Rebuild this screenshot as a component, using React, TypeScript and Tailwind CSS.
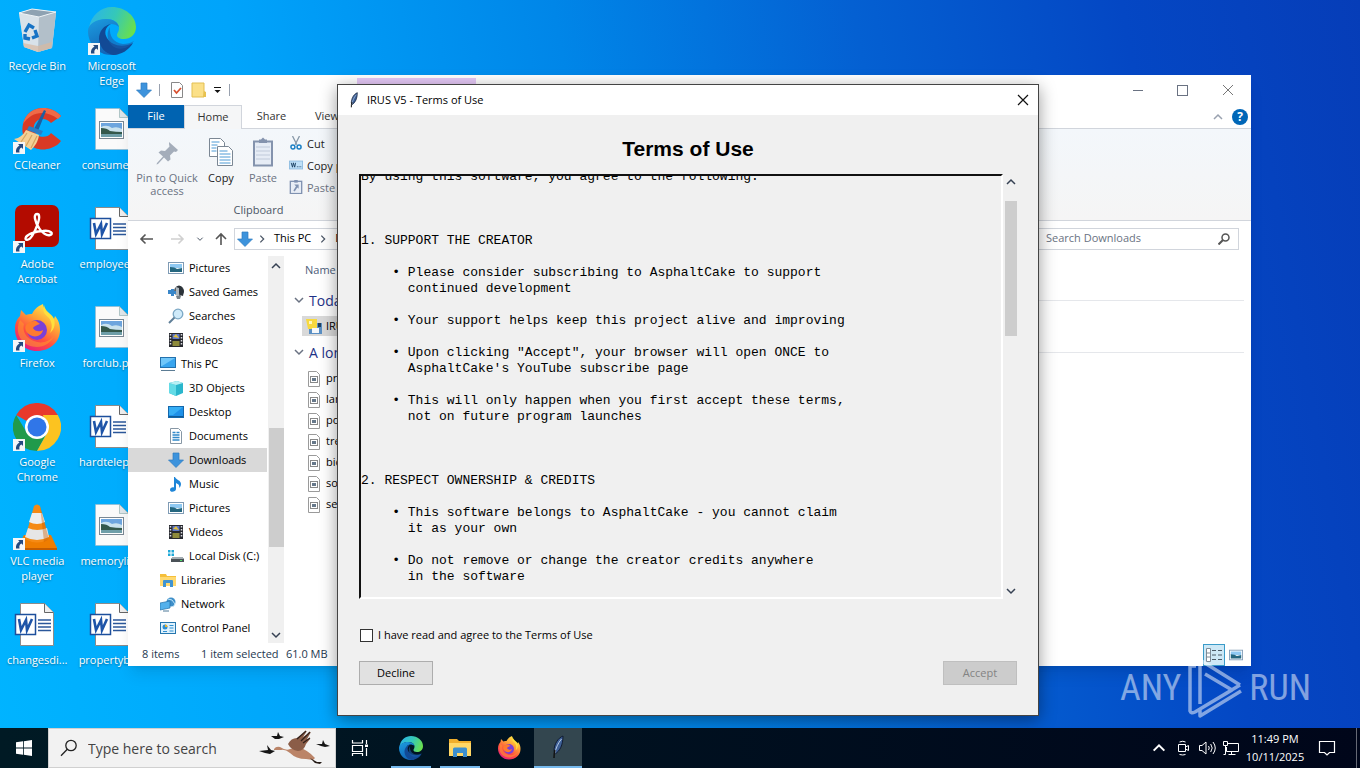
import { useState } from "react";
import type { ReactNode } from "react";

/* ---------- app logos ---------- */

function EdgeLogo({ className }: { className: string }) {
  return (
    <svg viewBox="0 0 48 48" className={className}>
      <defs>
        <linearGradient id="edgeGreen" x1="0" y1="0.3" x2="1" y2="0.6">
          <stop offset="0" stopColor="#2bb5e8" />
          <stop offset="0.5" stopColor="#35c8b8" />
          <stop offset="1" stopColor="#6be04a" />
        </linearGradient>
        <linearGradient id="edgeBlue" x1="0" y1="0" x2="0.4" y2="1">
          <stop offset="0" stopColor="#1c9de0" />
          <stop offset="1" stopColor="#1266b8" />
        </linearGradient>
      </defs>
      <path d="M1 21C3 8 13 0 24 0c13 0 24 9 24 20 0 8-6 12-12 12-5 0-7-2-7-4s2-3 2-7c0-5-5-9-12-9-8 0-16 4-18 9z" fill="url(#edgeGreen)" />
      <path d="M0 24c0-7 8-12 18-12 7 0 12 3 13 8-2-2-5-3-8-3-7 0-10 7-8 14 2 8 8 14 16 16-3 1-5 1-8 1C10 48 0 37 0 24z" fill="url(#edgeBlue)" />
      <path d="M23 17c-6 3-7 9-4 14 5 8 16 10 26 5-4 7-12 12-20 12-8-2-13-7-14-16 0-8 5-14 12-15z" fill="#124a96" />
      <path d="M22 20c-1 8 3 16 13 17 4 0 8-1 11-3-5 7-12 9-18 7-8-3-11-14-6-21z" fill="#1b5fae" opacity=".6" />
    </svg>
  );
}

function FirefoxLogo({ className }: { className: string }) {
  return (
    <svg viewBox="0 0 48 48" className={className}>
      <defs>
        <linearGradient id="foxBody" x1="0.8" y1="0" x2="0.2" y2="1">
          <stop offset="0" stopColor="#fff44f" />
          <stop offset="0.35" stopColor="#ffa436" />
          <stop offset="0.65" stopColor="#ff4f3f" />
          <stop offset="1" stopColor="#e31587" />
        </linearGradient>
      </defs>
      <path d="M24 47C11 47 2 37 2 25c0-6 2-10 5-13l1-6 5 5c2-1 4-1 6-1 2-4 4-6 7-8l4-2c0 4 2 7 6 11l5 4 1-3c4 5 5 9 5 14 0 12-10 21-23 21z" fill="url(#foxBody)" />
      <circle cx="24" cy="26" r="10" fill="#7a3fd8" />
      <path d="M14 20c3-3 6-3 9-3l4 3c-3 1-6 2-7 4 2 4 7 4 10 2-1 6-8 8-13 5-5-3-6-8-3-11z" fill="#ff7a2e" />
      <path d="M31 1c-2 5 0 9 4 12 4 4 5 10 2 16 5-4 6-11 3-16-3-4-8-6-9-12z" fill="#ffdf3c" />
      <path d="M7 16c-5 10-1 21 8 25 11 5 22 0 26-9-5 6-13 8-20 5-8-3-12-10-10-17z" fill="#ff9a2c" opacity=".55" />
    </svg>
  );
}

function ChromeLogo() {
  return (
    <svg viewBox="0 0 48 48" className="size-12">
      <path d="M24 24 3.2 12A24 24 0 0 1 44.8 12z" fill="#e8392c" />
      <path d="M3.2 12A24 24 0 0 0 24 48L34 30 24 24 14 30z" fill="#219a4b" />
      <path d="M44.8 12A24 24 0 0 1 24 48L34 30 30 12z" fill="#fcc320" />
      <circle cx="24" cy="24" r="12" fill="#fff" />
      <circle cx="24" cy="24" r="9.5" fill="#3076e8" />
    </svg>
  );
}

function VlcLogo() {
  return (
    <svg viewBox="0 0 48 48" className="size-12">
      <path d="M11 33h27l6 13H4z" fill="#ef7d00" />
      <path d="M4 46h40v2H4z" fill="#c45c00" />
      <path d="M21 4q3-3 6 0l9 33q-12 7-24 0z" fill="#f58a14" />
      <path d="M19 11h10l3 9q-8 4-16 0z" fill="#eee" />
      <path d="M15 26q9 4 19 0l2 9q-12 6-24 0z" fill="#e6e6e6" />
      <path d="M27 4l9 33-5 3z" fill="#c75d00" opacity=".4" />
    </svg>
  );
}

function AcrobatLogo() {
  return (
    <svg viewBox="0 0 48 48" className="size-12">
      <rect x="2" y="0" width="44" height="42" rx="7" fill="#b30b00" />
      <path d="M24 9c-4 0-2 8 2 14 3 5 8 8 11 7 4-1 1-5-7-4-7 0-15 3-17 6-2 4 3 4 6-1 4-6 8-17 7-20 0-1-1-2-2-2z" fill="none" stroke="#fff" strokeWidth="2.4" />
    </svg>
  );
}

function CCleanerLogo() {
  return (
    <svg viewBox="0 0 48 48" className="size-12">
      <path d="M48 10C36-3 14 0 10 18c-4 17 12 30 28 24 5-2 8-4 10-7l-10-8c-4 6-15 5-17-3-2-10 10-15 17-7z" fill="#d93a25" />
      <path d="M48 10C36-3 14 0 10 18c8-12 22-15 35-5z" fill="#ef6a48" />
      <path d="M31 4l2 1-8 20-4-2z" fill="#1c5fa0" />
      <path d="M16 20l14 5-2 4-14-5z" fill="#2b7ec6" />
      <path d="M13 24l13 5c-1 7-4 11-8 15L1 33c6-1 9-4 12-9z" fill="#f3cf95" />
      <path d="M14 27l-6 9M19 29l-6 11M24 30l-6 12" stroke="#d5a561" strokeWidth="1.2" />
    </svg>
  );
}

function RecycleBin() {
  return (
    <svg viewBox="0 0 48 48" className="size-12">
      <path d="M6 6l13-4 24 3-4 36-14 4-14-5z" fill="#c9d2da" opacity=".9" />
      <path d="M6 6l20 4 17-5-4 36-14 4-14-5z" fill="#e4e8ec" opacity=".75" />
      <path d="M26 10l17-5-4 36-14 4z" fill="#a9b6c1" opacity=".8" />
      <path d="M6 6l13-4 24 3-17 5z" fill="#8ea2b2" stroke="#eef3f6" strokeWidth="1" />
      <path d="M10 36l15 3 14-4-1 6-13 4-14-5z" fill="#d9b9a0" opacity=".7" />
      <g fill="none" stroke="#1673c5" strokeWidth="3.4">
        <path d="M12 25l4-7 5 3" />
        <path d="M22 23l2 6-5 2" />
        <path d="M17 32l-5-1 0-4" />
      </g>
    </svg>
  );
}

function WordFile() {
  return (
    <svg viewBox="2 0 48 48" className="size-12">
      <path d="M9.500 2.500h24l9 9v33h-33z" fill="#fff" stroke="#8b8b8b" />
      <path d="M33.500 2.500v9h9" fill="#eee" stroke="#666" />
      <path d="M27 19h13M27 22.500h13M27 26h13M27 29.500h13" stroke="#2b579a" strokeWidth="1.300" />
      <rect x="4.500" y="13.500" width="20" height="20" fill="#fff" stroke="#1d4f9c" strokeWidth="1.500" />
      <path d="M8 18l2 11 5-10 1 10 5-11" fill="none" stroke="#1e54a8" strokeWidth="2.600" />
    </svg>
  );
}

function PictureFile() {
  return (
    <svg viewBox="2 0 48 48" className="size-12">
      <path d="M9.500 2.500h24l9 9v32h-33z" fill="#fafafa" stroke="#9fb6c4" strokeWidth=".6" />
      <path d="M33.500 2.500v9h9z" fill="#dfe6ea" stroke="#8aa" strokeWidth=".6" />
      <rect x="13.500" y="15.500" width="24" height="17" fill="#fff" stroke="#7a8894" />
      <path d="M15 17h21v7H15z" fill="#6da5de" />
      <path d="M15 21q6-3 11 1 5-2 10 1v4H15z" fill="#c9e2ee" />
      <path d="M15 22q6 0 9 3 6 1 12 1v3H15z" fill="#35594c" />
      <path d="M15 28h21v3H15z" fill="#6f9fa9" />
    </svg>
  );
}

function ShortcutArrow() {
  return (
    <svg viewBox="0 0 12 12" className="absolute bottom-0 left-0 size-3">
      <rect width="12" height="12" fill="#f4f6f8" />
      <path d="M5 2h5v5L8.500 5.500C6.500 6.500 6 8 6.500 10.500H3C2.500 7.500 4 5 6.500 3.600z" fill="#244a80" />
    </svg>
  );
}

function Feather({ className }: { className: string }) {
  return (
    <svg viewBox="0 0 24 24" className={className}>
      <path d="M17 1c-5 2-9 8-9 15l1 3c5-3 8-9 8-18z" fill="#3d5f96" stroke="#101c33" />
      <path d="M15.500 4C12 8 10 13 8.500 19" stroke="#b8cbe6" fill="none" />
      <path d="M9 15c-1 3-1 5-1 8" stroke="#111" strokeWidth="1.500" fill="none" />
    </svg>
  );
}

/* ---------- small 16px icons ---------- */

const small: Record<string, ReactNode> = {
  pictures: (
    <>
      <rect x=".5" y="2.500" width="15" height="11" fill="#fff" stroke="#7f9bb5" />
      <path d="M2 4h12v4H2z" fill="#8fc9f2" />
      <path d="M2 7q5 0 7 2l5-1v4H2z" fill="#25677f" />
    </>
  ),
  games: (
    <>
      <circle cx="11" cy="7" r="5" fill="#5b636a" />
      <path d="M8 3q3-3 6 0l2 4-1 5-3-1z" fill="#2c3339" />
      <path d="M8 3l3 1v9l-3-2z" fill="#aeb6bc" />
      <path d="M0 6h3V5h3v2h2v3H6v2H3v-2H0z" fill="#3a87c9" />
      <path d="M8 12h5l-1 3H9z" fill="#7a838a" />
    </>
  ),
  searches: (
    <>
      <circle cx="10" cy="6" r="4.800" fill="#cfeaf9" stroke="#7ba7c4" strokeWidth="1.300" />
      <path d="M6.500 9.500L1 15" stroke="#5f7f98" strokeWidth="2" />
    </>
  ),
  videos: (
    <>
      <rect x="1" y="1" width="14" height="14" fill="#26282e" />
      <path d="M2.500 2v12M13.500 2v12" stroke="#dcdce2" strokeWidth="1.500" strokeDasharray="1.500 1.500" />
      <path d="M4.500 2h7v5h-7z" fill="#5d76c9" />
      <path d="M4.500 9h7v5h-7z" fill="#8d8a3b" />
      <path d="M5 5l3-3 3 4z" fill="#e0c040" />
    </>
  ),
  pc: (
    <>
      <rect x=".5" y="1.500" width="15" height="10" fill="#39a5ee" stroke="#2371ad" />
      <path d="M1 2h14L2 10H1z" fill="#7fd0fb" opacity=".8" />
      <path d="M1 14.500h14" stroke="#5c7c94" />
    </>
  ),
  cube: (
    <>
      <path d="M1 3l8-2 6 2v10l-7 3-7-3z" fill="#2ab6cc" />
      <path d="M1 3l7 2v11l-7-3z" fill="#63dbe6" />
      <path d="M1 3l8-2 6 2-7 2z" fill="#b8f0f4" />
    </>
  ),
  desktop: (
    <>
      <rect x=".5" y="2.500" width="15" height="11" fill="#1e90e8" stroke="#1467ab" />
      <path d="M1 3h14L5 11H1z" fill="#36aef5" />
      <path d="M1 12.500h14" stroke="#0d5a99" />
    </>
  ),
  documents: (
    <>
      <path d="M2.500.5h8l3 3v12h-11z" fill="#fff" stroke="#8797a5" />
      <path d="M4.500 4.500h3m1 0h3M4.500 7h7M4.500 9.500h7M4.500 12h7" stroke="#3189c9" strokeWidth="1.300" />
    </>
  ),
  down: <path d="M5 1h6v7h4.500L8 15.500.5 8H5z" fill="#3d93dc" stroke="#2f7cc0" strokeWidth=".7" />,
  music: <path d="M7 1c1 3 6 3 6 7 0 2-1 3-2 4 1-3-1-4-3-5v6c0 3-6 4-6 1 0-2 2-3 4-2.500V1z" fill="#1f86d8" />,
  disk: (
    <>
      <path d="M0 2h2.500v2.500H0zM3.500 2H6v2.500H3.500zM0 5.500h2.500V8H0zM3.500 5.500H6V8H3.500z" fill="#20a9d8" />
      <path d="M3 11l2-2h9l2 2v3H3z" fill="#4a5257" />
      <path d="M3 11l2-2h9l2 2z" fill="#a4adb3" />
      <path d="M12 12.500h2" stroke="#4fe06c" />
    </>
  ),
  libraries: (
    <>
      <path d="M0 2h6l1 2h9v10H0z" fill="#f5bf3a" />
      <path d="M0 5h16v9H0z" fill="#ffd970" />
      <path d="M3 15V9q0-1 1-1h8q1 0 1 1v6h-3v-4H6v4z" fill="#3f93d2" />
    </>
  ),
  network: (
    <>
      <circle cx="11" cy="6" r="4.500" fill="#3e8fc9" />
      <path d="M8 3l4 1 3 4-2 3" stroke="#bfe5fa" fill="none" />
      <path d="M0 7l10-2v7L0 14z" fill="#54b1ec" stroke="#2471aa" strokeWidth=".7" />
      <path d="M3 15h6" stroke="#4c7898" />
    </>
  ),
  control: (
    <>
      <rect x=".5" y="2.500" width="15" height="11" fill="#dff2fd" stroke="#2576ae" />
      <circle cx="5" cy="7" r="2.500" fill="#2f8fd2" />
      <path d="M5 4.500A2.500 2.500 0 0 1 7.500 7H5z" fill="#f0b429" />
      <path d="M9.500 5.500h4M9.500 8h4M3 11.500h4M9.500 11h4" stroke="#2f8fd2" />
    </>
  ),
  file: (
    <>
      <path d="M2.500.5h8l3 3v12h-11z" fill="#fff" stroke="#9a9a9a" />
      <rect x="4.500" y="5.500" width="7" height="6" fill="#fff" stroke="#888" />
      <path d="M6 7h4v3H6z" fill="#66788a" />
    </>
  ),
  floppy: (
    <>
      <path d="M3 5h13v11H3z" fill="#5a8fc4" />
      <path d="M0 1h11v10H2z" fill="#f7d93f" />
      <path d="M6 10h7v5H6z" fill="#f4f7fa" />
      <path d="M3 3h3v3H3z" fill="#fff7bf" />
      <path d="M12 5h3v4h-3z" fill="#23415f" />
    </>
  ),
  cut: (
    <>
      <path d="M4 0l5 10M12 0L7 10" stroke="#8798a8" strokeWidth="1.500" />
      <circle cx="4.500" cy="12.500" r="2.300" fill="none" stroke="#1b7fc4" strokeWidth="1.700" />
      <circle cx="11.500" cy="12.500" r="2.300" fill="none" stroke="#1b7fc4" strokeWidth="1.700" />
    </>
  ),
  path: (
    <>
      <rect x=".5" y="3.500" width="15" height="9" fill="#bfe0f8" stroke="#8cbbe0" />
      <path d="M2.500 5.500l1.500 5 1-5 1.500 5 1-5M9 10h1m1 0h1m1 0h1" stroke="#14395c" fill="none" />
    </>
  ),
  shortcut: (
    <>
      <rect x="1.500" y="1.500" width="13" height="14" fill="#e8edf5" stroke="#7f91b0" strokeWidth="1.500" />
      <path d="M6 0h4v3H6z" fill="#7f91b0" />
      <path d="M6 5h5v5L9.500 8.500 6.500 13 5 12l3-5z" fill="#7f91b0" />
    </>
  ),
};

function Small({ name, className = "size-4" }: { name: string; className?: string }) {
  return (
    <svg viewBox="0 0 16 16" className={`${className} shrink-0`}>
      {small[name]}
    </svg>
  );
}

function Chevron({ d, className = "size-3" }: { d: "up" | "down" | "right"; className?: string }) {
  const paths = { up: "M2 8l4-4 4 4", down: "M2 4l4 4 4-4", right: "M4 2l4 4-4 4" };
  return (
    <svg viewBox="0 0 12 12" className={`${className} shrink-0`} fill="none" stroke="currentColor" strokeWidth="1.500">
      <path d={paths[d]} />
    </svg>
  );
}

/* ---------- desktop ---------- */

const shortcuts: { label: string; icon: ReactNode; link?: boolean }[] = [
  { label: "Recycle Bin", icon: <RecycleBin /> },
  { label: "CCleaner", icon: <CCleanerLogo />, link: true },
  { label: "Adobe Acrobat", icon: <AcrobatLogo />, link: true },
  { label: "Firefox", icon: <FirefoxLogo className="size-12" />, link: true },
  { label: "Google Chrome", icon: <ChromeLogo />, link: true },
  { label: "VLC media player", icon: <VlcLogo />, link: true },
  { label: "changesdi...", icon: <WordFile /> },
  { label: "Microsoft Edge", icon: <EdgeLogo className="size-12" />, link: true },
  { label: "consumer...", icon: <PictureFile /> },
  { label: "employees...", icon: <WordFile /> },
  { label: "forclub.png", icon: <PictureFile /> },
  { label: "hardteleph...", icon: <WordFile /> },
  { label: "memorylis...", icon: <PictureFile /> },
  { label: "propertyba...", icon: <WordFile /> },
];

function DesktopIcons() {
  return (
    <ul className="grid w-[149px] grid-flow-col grid-cols-2 grid-rows-[repeat(7,99px)]">
      {shortcuts.map((s) => (
        <li key={s.label} className="flex flex-col items-center pt-[7px]">
          <div className="relative size-12">
            {s.icon}
            {s.link && <ShortcutArrow />}
          </div>
          <span className="mt-[3px] max-w-[70px] text-center text-[11px] leading-[15px] text-white [text-shadow:0_1px_2px_#0006]">
            {s.label}
          </span>
        </li>
      ))}
    </ul>
  );
}

/* ---------- file explorer ---------- */

const tree = [
  { name: "Pictures", icon: "pictures", deep: true },
  { name: "Saved Games", icon: "games", deep: true },
  { name: "Searches", icon: "searches", deep: true },
  { name: "Videos", icon: "videos", deep: true },
  { name: "This PC", icon: "pc" },
  { name: "3D Objects", icon: "cube", deep: true },
  { name: "Desktop", icon: "desktop", deep: true },
  { name: "Documents", icon: "documents", deep: true },
  { name: "Downloads", icon: "down", deep: true },
  { name: "Music", icon: "music", deep: true },
  { name: "Pictures", icon: "pictures", deep: true },
  { name: "Videos", icon: "videos", deep: true },
  { name: "Local Disk (C:)", icon: "disk", deep: true },
  { name: "Libraries", icon: "libraries" },
  { name: "Network", icon: "network" },
  { name: "Control Panel", icon: "control" },
];

const files = ["pro", "lan", "pos", "tre", "bio", "sou", "sea"];

function ExplorerTitle() {
  return (
    <div className="flex h-[30px] items-center pl-2 text-gray-600">
      <Small name="down" />
      <span className="ml-[7px] h-3 w-px bg-gray-400" />
      <svg viewBox="0 0 16 16" className="ml-[9px] size-4">
        <path d="M2.500.5h8l3 3v12h-11z" fill="#fff" stroke="#888" />
        <path d="M5 8l2.500 3L12 6" fill="none" stroke="#d8502f" strokeWidth="1.800" />
      </svg>
      <svg viewBox="0 0 16 16" className="ml-1.5 size-4">
        <path d="M1 1h12v14H1z" fill="#fbe088" stroke="#e3bf52" />
        <path d="M13 9l2 1v5h-3z" fill="#e8c24f" />
      </svg>
      <svg viewBox="0 0 9 8" className="ml-1.5 h-2 w-[9px]">
        <path d="M1 1.500h7" stroke="#111" />
        <path d="M1.500 4h6l-3 3z" fill="#111" />
      </svg>
      <span className="ml-[7px] h-3 w-px bg-gray-400" />
      {/* contextual tab group */}
      <span className="mt-[3px] ml-[127px] w-[119px] self-stretch bg-[#e6c9f8]" />
      <div className="ml-auto flex items-center gap-[34px] pr-[17px]">
        <button aria-label="Minimize" className="h-px w-2.5 bg-gray-500" />
        <button aria-label="Maximize" className="size-[11px] border border-gray-500" />
        <button aria-label="Close">
          <svg viewBox="0 0 12 12" className="size-3" stroke="#777">
            <path d="M1 1l10 10M11 1L1 11" />
          </svg>
        </button>
      </div>
    </div>
  );
}

function Ribbon() {
  return (
    <>
      <div className="flex h-6 items-stretch border-b border-gray-300 text-[#333]">
        <button className="w-14 bg-[#0063b1] text-white">File</button>
        <button className="-mb-px w-[58px] border border-b-0 border-gray-300 bg-[#f5f6f7]">Home</button>
        <button className="w-[59px]">Share</button>
        <button className="w-[52px]">View</button>
        <div className="ml-auto flex items-center gap-2 pr-[3px] text-gray-400">
          <Chevron d="up" />
          <button aria-label="Help" className="size-4 rounded-full bg-[#0067b8] text-[12px] leading-4 font-bold text-white">
            ?
          </button>
        </div>
      </div>
      <div className="h-[92px] border-b border-gray-300 bg-linear-to-b from-[#f3f7fb] to-[#f5f5f5] pl-1.5">
        <div className="flex h-full w-[249px] flex-col justify-between pb-0.5">
          <div className="flex leading-[13px] text-gray-500">
            <button className="flex w-[66px] shrink-0 flex-col items-center pt-3">
              <svg viewBox="0 0 24 24" className="size-6">
                <path d="M14 1l9 8-2 2-2-.5-4 4 .5 4-2.500 2-4-4-6 6.500-1.500.5.500-1.500 6-6.500-4.500-4 2.500-2 4 .5 4.500-4.500-.5-2.500z" fill="#a4adba" />
              </svg>
              <span className="mt-1.5">Pin to Quick access</span>
            </button>
            <button className="flex w-[42px] shrink-0 flex-col items-center pt-2 text-[#222]">
              <svg viewBox="0 0 26 30" className="h-[30px] w-[26px]">
                <g fill="#fff" stroke="#7b8794">
                  <path d="M1.500 1.500h11l4 4v14h-15z" />
                  <path d="M9.500 9.500h11l4 4v15h-15z" />
                </g>
                <path d="M3.500 5h8M3.500 8h6M3.500 11h5M3.500 14h5M11.500 14h8M11.500 17h11M11.500 20h11M11.500 23h11M11.500 26h11" stroke="#4d9ad5" />
              </svg>
              <span className="mt-1">Copy</span>
            </button>
            <button className="flex w-[42px] shrink-0 flex-col items-center pt-2">
              <svg viewBox="0 0 22 30" className="h-[30px] w-[22px]">
                <path d="M2 4.500h18v24H2z" fill="#e6ecf5" stroke="#8493ad" strokeWidth="2" />
                <path d="M7 2.500h2l2-2 2 2h2V6H7z" fill="#8493ad" />
                <path d="M4 10h14M4 14h14M4 18h14M4 22h14" stroke="#c0cada" />
              </svg>
              <span className="mt-1">Paste</span>
            </button>
            <div className="flex flex-col pt-[3px] pl-[5px] whitespace-nowrap">
              <button className="flex h-[22px] items-center gap-1 text-[#222]">
                <Small name="cut" className="size-3.5" /> Cut
              </button>
              <button className="flex h-[22px] items-center gap-1 text-[#222]">
                <Small name="path" className="size-3.5" /> Copy path
              </button>
              <button className="flex h-[22px] items-center gap-1">
                <Small name="shortcut" className="size-3.5" /> Paste shortcut
              </button>
            </div>
          </div>
          <div className="text-center leading-4 text-gray-600">Clipboard</div>
        </div>
      </div>
    </>
  );
}

function AddressBar() {
  return (
    <div className="flex h-[35px] items-center pr-3 pl-[11px] text-gray-600">
      <svg viewBox="0 0 16 12" className="h-3 w-4" fill="none" stroke="#555" strokeWidth="1.600">
        <path d="M14 6H2M6.500 1.500L2 6l4.500 4.500" />
      </svg>
      <svg viewBox="0 0 16 12" className="ml-3.5 h-3 w-4" fill="none" stroke="#d0d0d0" strokeWidth="1.600">
        <path d="M2 6h12M9.500 1.500L14 6l-4.500 4.500" />
      </svg>
      <Chevron d="down" className="ml-[11px] size-2" />
      <svg viewBox="0 0 14 14" className="ml-2.5 size-3.5" fill="none" stroke="#555" strokeWidth="1.600">
        <path d="M7 13V2M2 7l5-5 5 5" />
      </svg>
      <div className="ml-1.5 flex h-[22px] flex-1 items-center gap-[7px] border border-gray-300 pl-0.5">
        <Small name="down" />
        <Chevron d="right" className="-ml-[3px] size-2.5" />
        <span className="text-black">This PC</span>
        <Chevron d="right" className="size-2.5" />
        <span className="text-black">Downloads</span>
      </div>
      <label className="ml-3 flex h-[22px] w-[204px] items-center border border-gray-300 pr-2 pl-2.5">
        <input
          aria-label="Search Downloads"
          placeholder="Search Downloads"
          className="min-w-0 flex-1 outline-none placeholder:text-gray-500"
        />
        <svg viewBox="0 0 12 12" className="size-3" fill="none" stroke="#555">
          <circle cx="7.500" cy="4.500" r="3.500" strokeWidth="1.500" />
          <path d="M5 7l-4.500 4.500" strokeWidth="2" />
        </svg>
      </label>
    </div>
  );
}

function GroupHeader({ children }: { children: ReactNode }) {
  return (
    <div className="flex h-8 items-center gap-1 pr-[7px] pl-[9px] text-[14px] text-[#1e3287]">
      <Chevron d="down" className="size-3 text-gray-500" />
      {children}
      <span className="h-px flex-1 bg-gray-200" />
    </div>
  );
}

function Explorer() {
  return (
    <section className="absolute top-[75px] right-[109px] bottom-[102px] left-32 flex flex-col overflow-hidden bg-white text-[11px] shadow-lg">
      <ExplorerTitle />
      <Ribbon />
      <AddressBar />
      <div className="flex min-h-0 flex-1">
        <nav className="w-[139px] overflow-hidden">
          {tree.map((t, i) => (
            <a
              key={i}
              href="#"
              className={`flex h-6 items-center gap-[5px] whitespace-nowrap text-black ${t.deep ? "pl-10" : "pl-8"} ${
                t.name === "Downloads" ? "bg-[#d9d9d9]" : ""
              }`}
            >
              <Small name={t.icon} />
              {t.name}
            </a>
          ))}
        </nav>
        <div className="ml-px flex w-4 flex-col items-center bg-[#f0f0f0] pt-1 pb-0.5 text-gray-700">
          <Chevron d="up" />
          <div className="mt-[156px] h-[119px] w-[15px] bg-[#cdcdcd]" />
          <Chevron d="down" className="mt-auto size-3" />
        </div>
        <div className="min-w-0 flex-1">
          <div className="flex h-7 items-center pl-[21px] text-[#4c607a]">Name</div>
          <GroupHeader>Today</GroupHeader>
          <div className="ml-[18px] flex h-5 w-64 items-center gap-1 bg-[#d9d9d9] pl-1">
            <Small name="floppy" />
            IRUS V5
          </div>
          <GroupHeader>A long time ago</GroupHeader>
          <ul>
            {files.map((f) => (
              <li key={f} className="flex h-[21px] items-center gap-1 pl-[22px]">
                <Small name="file" />
                {f}
              </li>
            ))}
          </ul>
        </div>
      </div>
      <div className="flex h-[23px] shrink-0 items-center pr-2 pl-3.5 text-[#24384f]">
        <span className="w-[59px]">8 items</span>
        <span className="w-[85px]">1 item selected</span>
        <span>61.0 MB</span>
        <div className="ml-auto flex items-center gap-1">
          <button aria-label="Details view" className="border border-[#3a9bc9] bg-[#cde8f6] p-px">
            <svg viewBox="0 0 18 18" className="size-[18px]">
              <path d="M1.500 2.500h4v13h-4zM1.500 7h4M1.500 11h4" fill="#fff" stroke="#7d8b96" />
              <path d="M7 4.500h4m2 0h4M7 9h4m2 0h4M7 13.500h4m2 0h4" stroke="#4a5a66" />
            </svg>
          </button>
          <button aria-label="Thumbnail view">
            <Small name="pictures" className="size-3.5" />
          </button>
        </div>
      </div>
    </section>
  );
}

/* ---------- terms dialog ---------- */

const terms = `By using this software, you agree to the following:



1. SUPPORT THE CREATOR

    • Please consider subscribing to AsphaltCake to support
      continued development

    • Your support helps keep this project alive and improving

    • Upon clicking "Accept", your browser will open ONCE to
      AsphaltCake's YouTube subscribe page

    • This will only happen when you first accept these terms,
      not on future program launches



2. RESPECT OWNERSHIP & CREDITS

    • This software belongs to AsphaltCake - you cannot claim
      it as your own

    • Do not remove or change the creator credits anywhere
      in the software
`;

function TermsDialog() {
  const [agreed, setAgreed] = useState(false);

  return (
    <section
      role="dialog"
      aria-labelledby="dialog-title"
      className="absolute top-[84px] right-[321px] left-[337px] border border-[#444] bg-[#f0f0f0] text-[11px] text-black shadow-[0_4px_16px_#0006]"
    >
      <header className="flex h-[30px] items-center bg-white pr-[9px] pl-2">
        <Feather className="size-4" />
        <h1 id="dialog-title" className="ml-[5px]">IRUS V5 - Terms of Use</h1>
        <button aria-label="Close" className="ml-auto">
          <svg viewBox="0 0 12 12" className="size-3" stroke="#111" strokeWidth="1.200">
            <path d="M1 1l10 10M11 1L1 11" />
          </svg>
        </button>
      </header>
      <div className="px-[21px] pb-[30px]">
        <h2 className="pt-[19px] pb-2.5 text-center font-['Liberation_Sans',sans-serif] text-[21px] leading-[30px] font-bold">
          Terms of Use
        </h2>
        <div className="flex h-[425px] gap-0.5">
          <div
            tabIndex={0}
            className="min-w-0 flex-1 overflow-hidden border-2 border-t-[#111] border-r-white border-b-white border-l-[#111]"
          >
            <pre className="-mt-[7px] font-['Liberation_Mono',monospace] text-[13px] leading-4">{terms}</pre>
          </div>
          <div className="flex w-3 flex-col items-center py-0.5 text-gray-700">
            <Chevron d="up" />
            <div className="mt-[13px] h-[135px] w-full bg-[#cdcdcd]" />
            <Chevron d="down" className="mt-auto size-3" />
          </div>
        </div>
        <label className="mt-[26px] flex h-5 items-center gap-[5px]">
          <input
            type="checkbox"
            checked={agreed}
            onChange={(e) => setAgreed(e.target.checked)}
            className="ml-px size-[13px] appearance-none border border-[#333] bg-white checked:bg-[#0078d7]"
          />
          I have read and agree to the Terms of Use
        </label>
        <div className="mt-4 flex justify-between">
          <button className="h-6 w-[74px] border border-[#adadad] bg-[#e1e1e1]">Decline</button>
          <button
            disabled={!agreed}
            className="h-6 w-[74px] border border-[#adadad] bg-[#e1e1e1] disabled:border-[#bfbfbf] disabled:bg-[#cccccc] disabled:text-[#838383]"
          >
            Accept
          </button>
        </div>
      </div>
    </section>
  );
}

/* ---------- watermark and taskbar ---------- */

function Watermark() {
  return (
    <div className="absolute right-[49px] bottom-[9px] mb-10 flex items-center gap-1.5 font-['Liberation_Sans_Narrow','Roboto_Condensed','Roboto',sans-serif] text-[36px] leading-none text-white/50">
      <span>ANY</span>
      <svg viewBox="0 0 56 62" className="h-[62px] w-14" fill="none" stroke="currentColor" strokeWidth="3.500" strokeLinejoin="round">
        <path d="M9 9H3v45q1 3 5 1L45 33 18 17M13 47V3l40 25M53 28L13 52v7l41-25" />
      </svg>
      <span>RUN</span>
    </div>
  );
}

function Geese() {
  return (
    <svg viewBox="0 0 72 38" className="h-[38px] w-[72px]">
      <path d="M15 20q2-3 6-2 6 4 10 2l8-2q10 3 17 11l-2 2-7-1q-10 0-16-6-5-4-9-3l-7 0z" fill="#bb8468" />
      <path d="M29 15q3-6 9-6l10-7-4 6 8-5-4 7 3 0-4 5q-2 7-8 7-7-1-10-7z" fill="#8b5d48" />
      <path d="M38 10L47 2M42 12l9-9M44 14l7-5" stroke="#33201a" strokeWidth="1.400" fill="none" />
      <path d="M51 29l7 4 5 0-2 2-5-1z" fill="#241a16" />
      <g fill="#161616">
        <path d="M12 7l6 0 1-4 2 4 4 1-5 2-4 0z" />
        <path d="M0 22l9-1-1-5 4 5 4 1-5 3-5-1z" />
        <path d="M57 15l6 0 1-4 2 4 5 2-5 1-4-1z" />
      </g>
    </svg>
  );
}

function TaskButton({ label, running, active, children }: { label: string; running?: boolean; active?: boolean; children: ReactNode }) {
  return (
    <button
      aria-label={label}
      className={`relative flex h-10 w-12 items-center justify-center ${active ? "border-b-2 border-[#76b9ed] bg-[#33464f]" : ""}`}
    >
      {children}
      {running && <span className="absolute inset-x-1 bottom-0 h-0.5 bg-[#76b9ed]" />}
    </button>
  );
}

function Taskbar() {
  return (
    <footer className="relative flex h-10 items-center bg-linear-to-r from-[#001a24] to-[#00061a] text-white">
      <button aria-label="Start" className="flex h-10 w-12 items-center justify-center">
        <svg viewBox="0 0 16 16" className="size-4" fill="#fff">
          <path d="M0 2.300L7 1.300V7.600H0zM7.800 1.200L16 0v7.600H7.800zM0 8.400h7v6.300L0 13.700zM7.800 8.400H16V16l-8.200-1.200z" />
        </svg>
      </button>
      <label className="flex h-10 w-72 items-center border border-[#d0d0d0] bg-[#f2f2f2] pr-1 pl-[11px]">
        <svg viewBox="0 0 18 18" className="size-[18px]" fill="none" stroke="#222" strokeWidth="1.300">
          <circle cx="11" cy="6.500" r="5.200" />
          <path d="M7.300 10.300L1 16.800" />
        </svg>
        <input
          aria-label="Type here to search"
          placeholder="Type here to search"
          className="ml-2.5 min-w-0 flex-1 text-[14px] outline-none placeholder:text-[#444]"
        />
        <Geese />
      </label>
      <TaskButton label="Task view">
        <svg viewBox="0 0 18 18" className="size-[18px]" fill="none" stroke="#fff" strokeWidth="1.200">
          <path d="M1.500 1v3h10V1M1.500 6.500h10v6h-10zM1.500 17v-2.500h10V17M15.500 1v4M15.500 9v8" />
          <path d="M14 5.500h3v2.500h-3z" fill="#fff" stroke="none" />
        </svg>
      </TaskButton>
      <div className="ml-[3px] flex gap-px">
        <TaskButton label="Microsoft Edge" running>
          <EdgeLogo className="size-6" />
        </TaskButton>
        <TaskButton label="File Explorer" running>
          <svg viewBox="0 0 24 24" className="size-6">
            <path d="M1 3h8l2 2h12v15H1z" fill="#f0ae2c" />
            <path d="M1 7h22v13H1z" fill="#ffd766" />
            <path d="M5 21v-8q0-1.500 1.500-1.500h11q1.500 0 1.500 1.500v8h-4v-4H9v4z" fill="#3c8fce" />
          </svg>
        </TaskButton>
        <TaskButton label="Firefox">
          <FirefoxLogo className="size-6" />
        </TaskButton>
        <TaskButton label="Terms of Use" active>
          <Feather className="size-6" />
        </TaskButton>
      </div>
      <div className="ml-auto flex items-center pr-[3px]">
        <Chevron d="up" className="mr-2 size-4" />
        <svg viewBox="0 0 16 16" className="size-4" fill="none" stroke="#fff">
          <path d="M3.500 4.500h7v7h-7zM10.500 7l3-1.500v5L10.500 9M4.500 2Q8 .5 10.500 2M4.500 14.500q3.500 1 6 0" />
        </svg>
        <svg viewBox="0 0 18 16" className="ml-[7px] h-4 w-[18px]" fill="none" stroke="#fff">
          <path d="M1.500 5.500h2.500l4-3.500v12l-4-3.500H1.500zM10.500 6q1.500 2 0 4M12.700 4q3 4 0 8M15 2q4.500 6 0 12" />
        </svg>
        <svg viewBox="0 0 18 16" className="ml-1.5 h-4 w-[18px]" fill="none" stroke="#fff">
          <path d="M6 3.500h10.500v8H4.500V7M9.500 11.500v3M6.500 14.500h7" />
          <path d="M1.500 1.500h4v4h-4zM3.500 5.500v9H1.500" />
        </svg>
        <div className="ml-0.5 w-[66px] text-center text-[11px] leading-[18px] whitespace-nowrap">
          <div>11:49 PM</div>
          <div>10/11/2025</div>
        </div>
        <svg viewBox="0 0 18 18" className="ml-2.5 size-[18px]" fill="none" stroke="#fff" strokeWidth="1.200">
          <path d="M1.500 2.500h15v11h-5L9 16l-2.500-2.500h-5z" />
        </svg>
        <span className="ml-5 h-10 w-px bg-white/40" />
      </div>
    </footer>
  );
}

export default function App() {
  return (
    <main className="relative flex min-h-screen flex-col overflow-hidden bg-[linear-gradient(80deg,#00b4ff_0%,#00a4fb_24%,#0086e8_46%,#0460d2_66%,#0447c4_84%,#063db8_100%)] font-['Open_Sans','Noto_Sans',sans-serif]">
      <div className="flex-1">
        <DesktopIcons />
      </div>
      <Explorer />
      <TermsDialog />
      <Watermark />
      <Taskbar />
    </main>
  );
}
